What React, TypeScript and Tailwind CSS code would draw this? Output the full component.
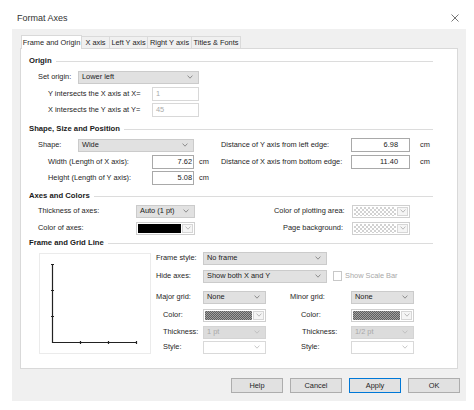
import React from "react";

function Chev({ c }: { c: string }) {
  return (
    <svg width="6" height="4" viewBox="0 0 6 4" className={c}>
      <path d="M0.6 0.6 L3 3.2 L5.4 0.6" fill="none" stroke="currentColor" strokeWidth="0.8" />
    </svg>
  );
}

function Select({ cls, text, variant = "normal" }: { cls: string; text?: string; variant?: "normal" | "disabled" | "blank" }) {
  const base =
    variant === "normal"
      ? "bg-[#e1e1e1] border-[#cbcbcb] text-[#1a1a1a]"
      : variant === "disabled"
      ? "bg-[#dcdcdc] border-[#d4d4d4] text-[#a8a8a8]"
      : "bg-white border-[#d9d9d9] text-[#999]";
  return (
    <div className={`${cls} h-[13px] border ${base} flex items-center justify-between pl-[3px] pr-[5px]`}>
      <span className="leading-none whitespace-nowrap">{text}</span>
      <Chev c={variant === "normal" ? "text-[#777]" : "text-[#bbb]"} />
    </div>
  );
}

function Input({ cls, value, disabled, wide }: { cls: string; value: string; disabled?: boolean; wide?: boolean }) {
  if (disabled) {
    return (
      <div className={`${cls} h-[14px] border border-[#d8d8d8] bg-white flex items-center pl-[3px] text-[#aaa]`}>
        <span className="leading-none">{value}</span>
      </div>
    );
  }
  return (
    <div
      className={`${cls} h-[14px] border border-[#a9a9a9] bg-white flex items-center justify-end ${
        wide ? "pr-[11px]" : "pr-[1px]"
      } text-[#1a1a1a]`}
    >
      <span className="leading-none">{value}</span>
    </div>
  );
}

function Swatch({ cls, fill }: { cls: string; fill: string }) {
  return (
    <div className={`${cls} h-[13px] border border-[#cfcfcf] bg-white flex p-[1px]`}>
      <div className={`flex-1 ${fill}`} />
      <div className="w-[11px] ml-[1px] flex items-center justify-center border border-[#d6d6d6] bg-[#f5f5f5]">
        <Chev c="text-[#aaa]" />
      </div>
    </div>
  );
}

function Header({ t, cls }: { t: string; cls: string }) {
  return (
    <div className={`flex items-center h-[14px] pl-[8px] pr-[24px] ${cls}`}>
      <span className="font-bold text-[7.7px] text-[#1a1a1a] leading-none whitespace-nowrap">{t}</span>
      <div className="flex-1 h-px bg-[#dcdcdc] ml-[4px]" />
    </div>
  );
}

const lightChecker =
  "[background-image:repeating-conic-gradient(#d2d2d2_0_25%,#ffffff_0_50%)] [background-size:4px_4px]";
const darkChecker =
  "[background-image:repeating-conic-gradient(#5e5e5e_0_25%,#a0a0a0_0_50%)] [background-size:2px_2px]";

export default function App() {
  return (
    <div className="w-[474px] h-[410px] bg-white overflow-hidden font-['Liberation_Sans',Arial,sans-serif] text-[7.4px] text-[#1e1e1e]">
      {/* Title bar */}
      <div className="h-[29px] pt-[7px] pl-[17px] pr-[15px] flex items-center justify-between">
        <span className="text-[9px] leading-none text-[#333]">Format Axes</span>
        <svg width="8" height="8" viewBox="0 0 8 8">
          <path d="M0.5 0.5 L7.5 7.5 M7.5 0.5 L0.5 7.5" stroke="#666" strokeWidth="0.9" />
        </svg>
      </div>

      {/* Dialog body */}
      <div className="ml-[12px] w-[454px] h-[372px] bg-[#f0f0f0] pt-[6px]">
        {/* Tabs */}
        <div className="relative z-10 flex items-end h-[13px] pl-[9px]">
          <div className="w-[61px] h-[14px] translate-y-[1px] bg-white border-t border-x border-[#d9d9d9] flex items-center justify-center leading-none">
            Frame and Origin
          </div>
          <div className="w-[28px] h-[12px] border-t border-r border-[#dadada] flex items-center justify-center leading-none">
            X axis
          </div>
          <div className="w-[38px] h-[12px] border-t border-r border-[#dadada] flex items-center justify-center leading-none">
            Left Y axis
          </div>
          <div className="w-[44px] h-[12px] border-t border-r border-[#dadada] flex items-center justify-center leading-none">
            Right Y axis
          </div>
          <div className="w-[49px] h-[12px] border-t border-r border-[#dadada] flex items-center justify-center leading-none">
            Titles &amp; Fonts
          </div>
        </div>

        {/* Tab panel */}
        <div className="ml-[8px] w-[438px] h-[321px] border border-[#d9d9d9] bg-white">
          <Header t="Origin" cls="mt-[5px]" />
          <div className="flex items-center h-[14px] mt-[2px] pl-[17px]">
            <span className="w-[40px] leading-none">Set origin:</span>
            <Select cls="w-[121px]" text="Lower left" />
          </div>
          <div className="flex items-center h-[14px] mt-[3px] pl-[27px]">
            <span className="w-[104px] leading-none">Y intersects the X axis at X=</span>
            <Input cls="w-[47px]" value="1" disabled />
          </div>
          <div className="flex items-center h-[14px] mt-[2px] pl-[27px]">
            <span className="w-[104px] leading-none">X intersects the Y axis at Y=</span>
            <Input cls="w-[47px]" value="45" disabled />
          </div>

          <Header t="Shape, Size and Position" cls="mt-[5px]" />
          <div className="flex items-center h-[14px] mt-[2px]">
            <div className="w-[200px] flex items-center pl-[17px]">
              <span className="w-[40px] leading-none">Shape:</span>
              <Select cls="w-[116px]" text="Wide" />
            </div>
            <span className="w-[130px] leading-none">Distance of Y axis from left edge:</span>
            <Input cls="w-[59px]" value="6.98" wide />
            <span className="ml-[10px] leading-none">cm</span>
          </div>
          <div className="flex items-center h-[14px] mt-[3px]">
            <div className="w-[200px] flex items-center pl-[27px]">
              <span className="w-[104px] leading-none">Width (Length of X axis):</span>
              <Input cls="w-[42px]" value="7.62" />
              <span className="ml-[5px] leading-none">cm</span>
            </div>
            <span className="w-[130px] leading-none">Distance of X axis from bottom edge:</span>
            <Input cls="w-[59px]" value="11.40" wide />
            <span className="ml-[10px] leading-none">cm</span>
          </div>
          <div className="flex items-center h-[14px] mt-[2px] pl-[27px]">
            <span className="w-[104px] leading-none">Height (Length of Y axis):</span>
            <Input cls="w-[42px]" value="5.08" />
            <span className="ml-[5px] leading-none">cm</span>
          </div>

          <Header t="Axes and Colors" cls="mt-[4px]" />
          <div className="flex items-center h-[14px] mt-[1px]">
            <div className="w-[253px] flex items-center pl-[17px]">
              <span className="w-[98px] leading-none">Thickness of axes:</span>
              <Select cls="w-[59px]" text="Auto (1 pt)" />
            </div>
            <span className="w-[78px] leading-none">Color of plotting area:</span>
            <Swatch cls="w-[58px]" fill={lightChecker} />
          </div>
          <div className="flex items-center h-[14px] mt-[3px]">
            <div className="w-[262px] flex items-center pl-[17px]">
              <span className="w-[98px] leading-none">Color of axes:</span>
              <Swatch cls="w-[59px]" fill="bg-black" />
            </div>
            <span className="w-[69px] leading-none">Page background:</span>
            <Swatch cls="w-[58px]" fill={lightChecker} />
          </div>

          <Header t="Frame and Grid Line" cls="mt-[1px]" />
          <div className="flex">
            <div className="ml-[18px] mt-[3px] w-[112px] h-[101px] border border-[#ebebeb] bg-white">
              <svg width="110" height="99" viewBox="0 0 110 99">
                <g stroke="#222" strokeWidth="1.2" fill="none">
                  <path d="M12.5 10 L12.5 88.5 L96.5 88.5" />
                  <path d="M11 10.5 H14 M11 36.5 H14 M11 62.5 H14" />
                  <path d="M40.5 87 V90 M68.5 87 V90 M96.5 87 V90" />
                </g>
              </svg>
            </div>
            <div className="ml-[5px] flex flex-col">
              <div className="flex items-center h-[14px] mt-[1px]">
                <span className="w-[47px] leading-none">Frame style:</span>
                <Select cls="w-[124px]" text="No frame" />
              </div>
              <div className="flex items-center h-[14px] mt-[4px]">
                <span className="w-[47px] leading-none">Hide axes:</span>
                <Select cls="w-[124px]" text="Show both X and Y" />
                <div className="ml-[6px] w-[9px] h-[10px] border border-[#c8c8c8] bg-white" />
                <span className="ml-[3px] leading-none text-[#a8a8a8]">Show Scale Bar</span>
              </div>
              <div className="flex items-center h-[14px] mt-[7px]">
                <span className="w-[47px] leading-none">Major grid:</span>
                <Select cls="w-[63px]" text="None" />
                <span className="ml-[24px] w-[61px] leading-none">Minor grid:</span>
                <Select cls="w-[63px]" text="None" />
              </div>
              <div className="flex items-center h-[14px] mt-[4px]">
                <span className="w-[47px] pl-[7px] leading-none">Color:</span>
                <Swatch cls="w-[63px]" fill={darkChecker} />
                <span className="ml-[24px] w-[61px] pl-[11px] leading-none">Color:</span>
                <Swatch cls="w-[63px]" fill={darkChecker} />
              </div>
              <div className="flex items-center h-[14px] mt-[3px]">
                <span className="w-[47px] pl-[7px] leading-none">Thickness:</span>
                <Select cls="w-[63px]" text="1 pt" variant="disabled" />
                <span className="ml-[24px] w-[61px] pl-[12px] leading-none">Thickness:</span>
                <Select cls="w-[63px]" text="1/2 pt" variant="disabled" />
              </div>
              <div className="flex items-center h-[14px] mt-[1px]">
                <span className="w-[47px] pl-[7px] leading-none">Style:</span>
                <Select cls="w-[63px]" variant="blank" />
                <span className="ml-[24px] w-[61px] pl-[11px] leading-none">Style:</span>
                <Select cls="w-[63px]" variant="blank" />
              </div>
            </div>
          </div>
        </div>

        {/* Buttons */}
        <div className="mt-[9px] flex pl-[219px] gap-[7px]">
          <div className="w-[52px] h-[15px] border border-[#adadad] bg-[#e1e1e1] flex items-center justify-center leading-none">
            Help
          </div>
          <div className="w-[52px] h-[15px] border border-[#adadad] bg-[#e1e1e1] flex items-center justify-center leading-none">
            Cancel
          </div>
          <div className="w-[52px] h-[15px] border border-[#0078d7] bg-[#e1e1e1] flex items-center justify-center leading-none">
            Apply
          </div>
          <div className="w-[52px] h-[15px] border border-[#adadad] bg-[#e1e1e1] flex items-center justify-center leading-none">
            OK
          </div>
        </div>
      </div>
    </div>
  );
}
